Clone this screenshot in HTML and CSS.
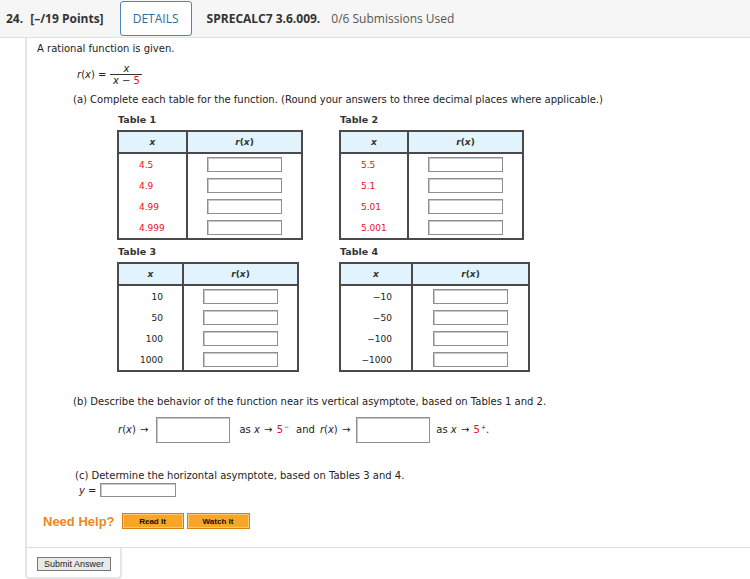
FILE: index.html
```html
<!DOCTYPE html>
<html>
<head>
<meta charset="utf-8">
<link rel="stylesheet" href="styles.css">
</head>
<body>
<header class="qhead">
  <span class="qnum">24.</span>
  <span class="qpts">[–/19 Points]</span>
  <button class="details">DETAILS</button>
  <span class="qid">SPRECALC7 3.6.009.</span>
  <span class="qsub">0/6 Submissions Used</span>
</header>
<div class="question">
  <p class="intro">A rational function is given.</p>
  <div class="formula">
    <span class="fn"><i>r</i>(<i>x</i>) =</span>
    <span class="frac"><span class="num"><i>x</i></span><span class="den"><i>x</i> − <span class="red">5</span></span></span>
  </div>
  <p class="part">(a) Complete each table for the function. (Round your answers to three decimal places where applicable.)</p>
  <div class="tables">
    <div class="tblock">
      <div class="tlabel">Table 1</div>
      <div class="tbl t1">
        <div class="th xc"><i>x</i></div><div class="th"><i>r</i>(<i>x</i>)</div>
        <div class="td xc left red">4.5</div><div class="td"><span class="inp"></span></div>
        <div class="td xc left red">4.9</div><div class="td"><span class="inp"></span></div>
        <div class="td xc left red">4.99</div><div class="td"><span class="inp"></span></div>
        <div class="td xc left red">4.999</div><div class="td"><span class="inp"></span></div>
      </div>
    </div>
    <div class="tblock">
      <div class="tlabel">Table 2</div>
      <div class="tbl t2">
        <div class="th xc"><i>x</i></div><div class="th"><i>r</i>(<i>x</i>)</div>
        <div class="td xc left red">5.5</div><div class="td"><span class="inp"></span></div>
        <div class="td xc left red">5.1</div><div class="td"><span class="inp"></span></div>
        <div class="td xc left red">5.01</div><div class="td"><span class="inp"></span></div>
        <div class="td xc left red">5.001</div><div class="td"><span class="inp"></span></div>
      </div>
    </div>
    <div class="tblock">
      <div class="tlabel">Table 3</div>
      <div class="tbl t3">
        <div class="th xc"><i>x</i></div><div class="th"><i>r</i>(<i>x</i>)</div>
        <div class="td xc right">10</div><div class="td"><span class="inp"></span></div>
        <div class="td xc right">50</div><div class="td"><span class="inp"></span></div>
        <div class="td xc right">100</div><div class="td"><span class="inp"></span></div>
        <div class="td xc right">1000</div><div class="td"><span class="inp"></span></div>
      </div>
    </div>
    <div class="tblock">
      <div class="tlabel">Table 4</div>
      <div class="tbl t4">
        <div class="th xc"><i>x</i></div><div class="th"><i>r</i>(<i>x</i>)</div>
        <div class="td xc right">−10</div><div class="td"><span class="inp"></span></div>
        <div class="td xc right">−50</div><div class="td"><span class="inp"></span></div>
        <div class="td xc right">−100</div><div class="td"><span class="inp"></span></div>
        <div class="td xc right">−1000</div><div class="td"><span class="inp"></span></div>
      </div>
    </div>
  </div>
  <p class="part partb">(b) Describe the behavior of the function near its vertical asymptote, based on Tables 1 and 2.</p>
  <div class="asym">
    <span class="fnx"><i>r</i>(<i>x</i>) <span class="arr">→</span></span>
    <span class="inp big"></span>
    <span class="mid">as <i>x</i> <span class="arr">→</span> <span class="red">5</span><sup>−</sup><span class="and">and</span><i>r</i>(<i>x</i>) <span class="arr">→</span></span>
    <span class="inp big"></span>
    <span class="end">as <i>x</i> <span class="arr">→</span> <span class="red">5</span><sup>+</sup>.</span>
  </div>
  <p class="part partc">(c) Determine the horizontal asymptote, based on Tables 3 and 4.</p>
  <div class="yrow"><span class="ylab"><i>y</i> =</span><span class="inp"></span></div>
  <div class="help">
    <span class="needhelp">Need Help?</span>
    <button class="hbtn">Read It</button>
    <button class="hbtn">Watch It</button>
  </div>
</div>
<div class="submitbox">
  <button class="submit">Submit Answer</button>
</div>
</body>
</html>
```

FILE: styles.css
```css
* { box-sizing: border-box; }
body {
  margin: 0;
  font-family: "DejaVu Sans", Verdana, sans-serif;
  font-size: 10px;
  color: #222;
  background: #fff;
}
p { margin: 0; }
.red { color: #e8101f; }

.qhead {
  display: flex;
  align-items: center;
  height: 38px;
  background: #f6f6f6;
  border-bottom: 1px solid #e2e2e2;
  padding-left: 6px;
  font-family: "Open Sans", sans-serif;
  font-size: 12px;
  color: #333;
}
.qnum { font-weight: 700; margin-right: 7px; }
.qpts { font-weight: 700; margin-right: 16px; }
.details {
  height: 35px;
  width: 72px;
  margin-right: 15px;
  padding: 0;
  background: #fff;
  border: 1.5px solid #4b86b4;
  border-radius: 3px;
  color: #2b6ca3;
  font-family: "Open Sans", sans-serif;
  font-size: 12px;
}
.qid { font-weight: 700; margin-right: 11px; }
.qsub { color: #555; }

.question {
  margin-left: 25px;
  border-left: 2px solid #e6e6e6;
  border-bottom: 1px solid #dedede;
  padding: 5px 0 18px 10px;
}
.intro { line-height: 12px; }

.formula {
  display: flex;
  align-items: center;
  margin: 8px 0 0 40px;
  gap: 4px;
}
.fn { line-height: 12px; }
.frac {
  display: inline-flex;
  flex-direction: column;
  align-items: center;
  width: 32px;
}
.num {
  line-height: 11px;
  border-bottom: 1px solid #333;
  width: 100%;
  text-align: center;
}
.den { line-height: 12px; }

.part { line-height: 12px; margin: 7px 0 0 36px; }

.tables {
  display: grid;
  grid-template-columns: 222px auto;
  row-gap: 6px;
  margin: 8px 0 0 80px;
}
.tlabel {
  font-weight: 700;
  font-size: 9.5px;
  line-height: 12px;
  margin: 0 0 4px 1px;
  color: #333;
}
.tbl {
  display: grid;
  border: 2px solid #4a4a4a;
  width: max-content;
  font-size: 9px;
}
.t1 { grid-template-columns: 69px 113px; }
.t2 { grid-template-columns: 68px 113px; }
.t3 { grid-template-columns: 65px 113px; }
.t4 { grid-template-columns: 72px 115px; }
.th {
  height: 22px;
  background: #e1f3fc;
  border-bottom: 2px solid #4a4a4a;
  display: flex;
  align-items: center;
  justify-content: center;
  font-weight: 700;
  color: #333;
}
.td {
  height: 21px;
  display: flex;
  align-items: center;
  justify-content: center;
}
.xc { border-right: 2px solid #4a4a4a; }
.td.left { justify-content: flex-start; padding-left: 20px; }
.td.right { justify-content: flex-end; padding-right: 19px; }

.inp {
  display: inline-block;
  width: 75px;
  height: 15px;
  background: #fff;
  border: 1px solid #8f8f8f;
  box-shadow: inset 1px 1px 0 #c8c8c8;
}
.inp.big { width: 74px; height: 26px; }

.partb { margin-top: 24px; }
.asym {
  display: flex;
  align-items: center;
  margin: 9px 0 0 81px;
  line-height: 12px;
  white-space: nowrap;
}
.arr { display: inline-block; margin: 0 1px; }
.fnx { margin-right: 7px; }
.mid { margin: 0 5px 0 9px; }
.end { margin-left: 6px; }
.and { margin: 0 5px 0 7px; }
sup { font-size: 6px; vertical-align: 4px; line-height: 0; margin-left: 1px; }

.partc { margin: 27px 0 0 38px; }
.yrow {
  display: flex;
  align-items: center;
  margin: 1px 0 0 42px;
}
.ylab { margin-right: 4px; }
.yrow .inp { width: 76px; height: 14px; }

.help {
  display: flex;
  align-items: center;
  margin: 16px 0 0 6px;
}
.needhelp {
  font-family: "Liberation Sans", Arial, sans-serif;
  font-weight: 700;
  font-size: 13px;
  color: #f0861e;
  margin-right: 7px;
}
.hbtn {
  width: 62px;
  height: 16px;
  margin-right: 3px;
  padding: 0;
  background: #f8a52a;
  border: 1px solid #d97f10;
  box-shadow: inset 0 0 0 1px #fcc873;
  font-family: "Liberation Sans", Arial, sans-serif;
  font-weight: 700;
  font-size: 8px;
  color: #111;
}
.hbtn + .hbtn { width: 63px; }

.submitbox {
  margin-left: 25px;
  width: 97px;
  height: 31px;
  border: 2px solid #e6e6e6;
  border-top: none;
  border-radius: 0 0 4px 4px;
  padding: 9px 0 0 10px;
}
.submit {
  width: 74px;
  height: 14px;
  padding: 0;
  background: #e9e9e9;
  border: 1px solid #777;
  font-family: "Liberation Sans", Arial, sans-serif;
  font-size: 9px;
  color: #222;
  display: block;
}
```
